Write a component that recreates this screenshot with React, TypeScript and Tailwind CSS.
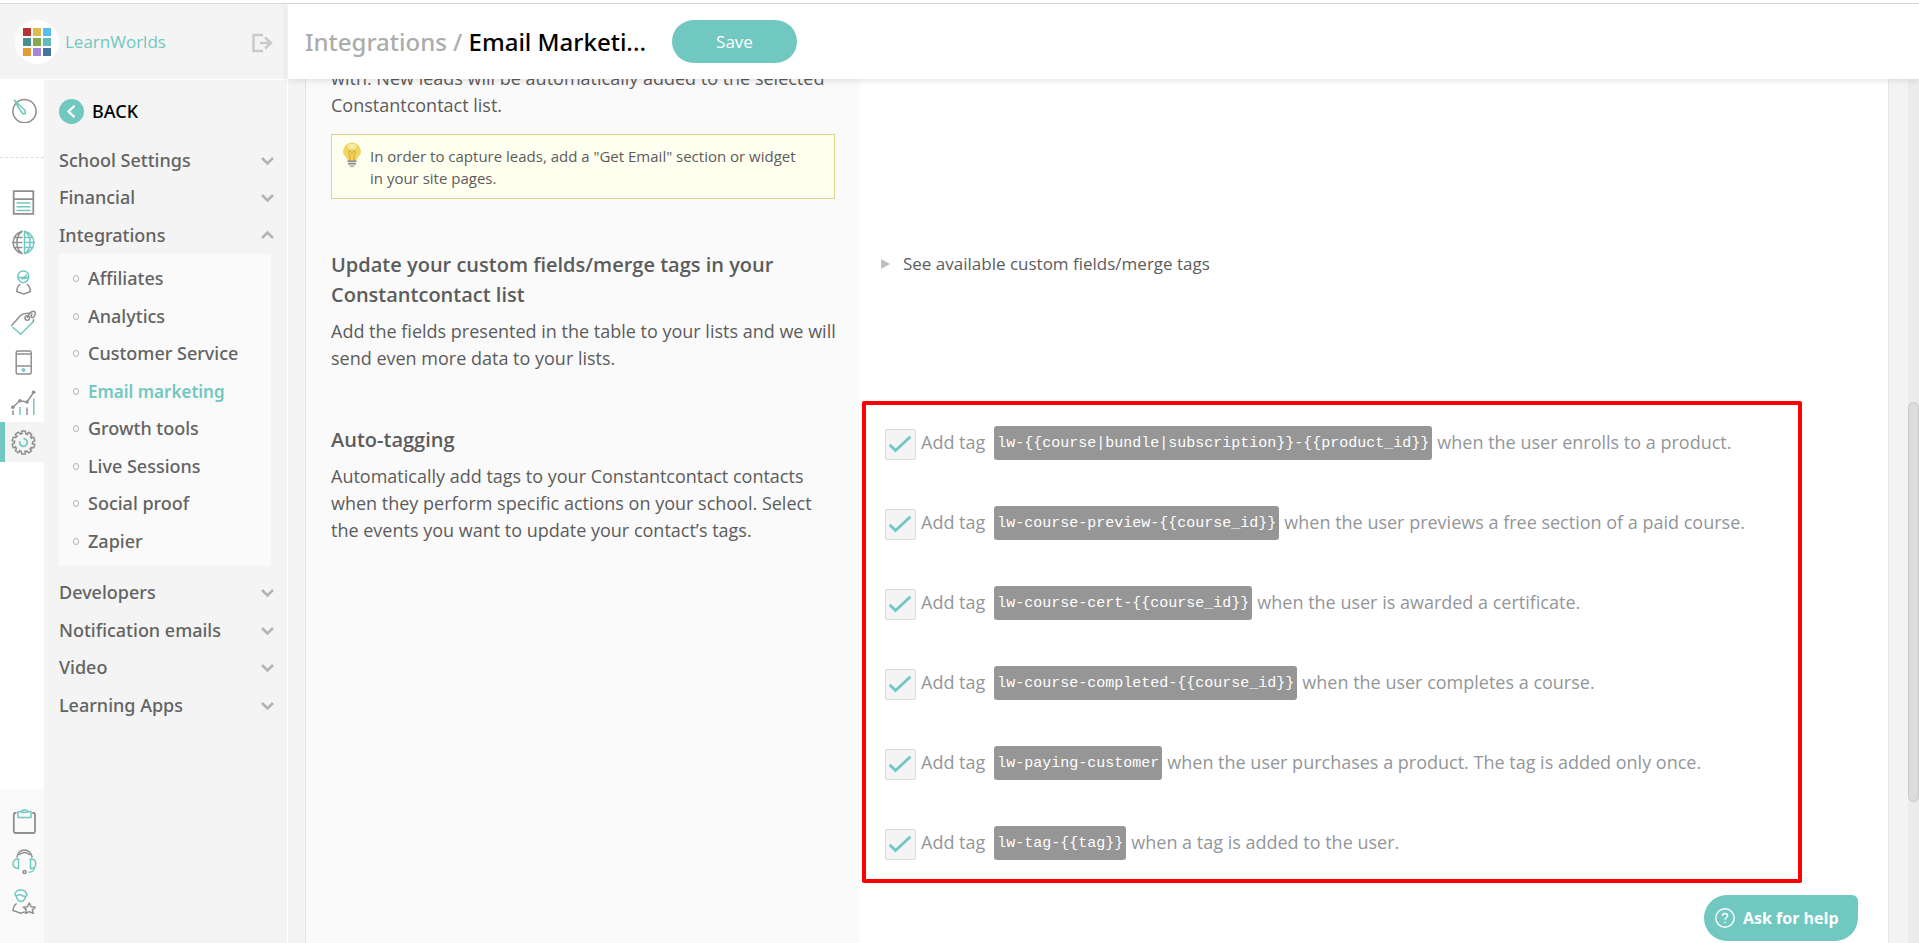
import type { ReactNode } from 'react'

const GREY = '#8f8f8f'
const TEAL = '#70c8c0'

const Icon = ({ children }: { children: ReactNode }) => (
  <svg viewBox="0 0 25 25" className="size-[25px]" fill="none" stroke={GREY} strokeWidth="1.5" aria-hidden="true">
    {children}
  </svg>
)

const GaugeIcon = () => (
  <Icon>
    <circle cx="12.5" cy="13.2" r="11.6" />
    <path d="M2.4 2.2 13.2 12.5v3.2h-2.4L7.2 10.5Z" stroke={TEAL} strokeLinejoin="round" />
  </Icon>
)

const PageIcon = () => (
  <Icon>
    <path d="M2.7 1.2h19.6v22.6H2.7zM2.7 9.2h19.6" strokeWidth="1.8" />
    <path d="M5.5 13h14M5.5 16.8h14M5.5 20.6h14" stroke={TEAL} />
  </Icon>
)

const GlobeIcon = () => (
  <Icon>
    <path d="M11.5 1.2A11.5 11.5 0 0 0 11.5 23.8M11.5 1.2C4 6 4 19 11.5 23.8M2.5 7.4h9M.9 12.5h10.6M2.5 17.6h9" />
    <path d="M13.5 1v23M13.5 1.2a11.5 11.5 0 0 1 0 22.6M13.5 1.2C21 6 21 19 13.5 23.8M13.5 7.4h9M13.5 12.5h10.6M13.5 17.6h9" stroke={TEAL} />
  </Icon>
)

const UserIcon = () => (
  <Icon>
    <path d="M12.3 1a5.4 5 0 0 1 5.5 5c0 4-2.5 6.7-5.5 6.7S6.8 10 6.8 6a5.4 5 0 0 1 5.5-5ZM7 7.5h3c3 0 5-1 5.5-3.2M10.2 8.8c3 0 5-.8 7.3-1.8" stroke={TEAL} />
    <path d="M8.9 14.5c-1.9 1.5-3.2 4.5-3 7.3l6.8 2.2 6.5-2.2c.2-2.8-1-5.8-3-7.3" strokeLinecap="round" />
  </Icon>
)

const TagIcon = () => (
  <Icon>
    <path d="M.7 15.5 9.5 5.6c2-2.1 4-2.6 9.5-2.4M22.5 9.8l-.4 2" strokeLinecap="round" />
    <circle cx="16.3" cy="8" r="2.3" />
    <path d="M16.3 8c1.5-4 4-7 6.5-6.7 2.4.6 1.6 4-.3 5.7-1 1-2.4.8-2.4-.6 0-1.2.5-2.2 1.3-3" />
    <path d="m1.5 17 8.2 7.2L22 12" stroke={TEAL} strokeLinejoin="round" />
  </Icon>
)

const PhoneIcon = () => (
  <Icon>
    <rect x="5.2" y="1" width="15" height="23" rx="1.5" />
    <path d="M5.2 4h15M5.2 16h15" />
    <circle cx="12.5" cy="20" r="1.5" fill={TEAL} stroke={TEAL} strokeWidth="1" />
  </Icon>
)

const ChartIcon = () => (
  <Icon>
    <path d="M1.8 17.2 8.9 10.8 16 12 22.5 2.5" />
    <g fill={GREY} stroke="none">
      <circle cx="1.8" cy="17.2" r="1.8" />
      <circle cx="8.9" cy="10.8" r="1.8" />
      <circle cx="16" cy="12" r="1.8" />
      <circle cx="22.6" cy="2.2" r="1.8" />
    </g>
    <path d="M2 20.5V25M16 17.5V25" />
    <path d="M9 17v8M22.8 8.5V25" stroke={TEAL} />
  </Icon>
)

// One tooth and the valley after it; the gear is ten of them round the centre
const TOOTH = 'M10.2 3.7 10.7 1.1h3.6l.5 2.6q1.2.3 2.4 1.2'

const GearIcon = () => (
  <Icon>
    {[0, 36, 72, 108, 144, 180, 216, 252, 288, 324].map((angle) => (
      <path key={angle} d={TOOTH} transform={`rotate(${angle} 12.5 12.5)`} strokeLinejoin="round" />
    ))}
    <path d="M12.5 8.7a3.8 3.8 0 1 1-3.6 2.5" stroke={TEAL} strokeWidth="1.8" />
  </Icon>
)

const ClipboardIcon = () => (
  <Icon>
    <path d="M4.5 4H3Q1.8 4 1.8 5.2V22.5Q1.8 24 3.2 24H21.6Q23 24 23 22.5V5.2Q23 4 21.8 4h-1.5" strokeWidth="1.8" />
    <path d="M6 2.8h2.7C9.7.4 15.3.4 16.3 2.8H19v5.7H6ZM9 2.8q3.5 1.5 7 0" stroke={TEAL} strokeLinejoin="round" />
  </Icon>
)

const HeadsetIcon = () => (
  <Icon>
    <path d="M4.8 8.5C6 3.5 9 1 12.5 1s6.5 2.5 7.7 7.5M7 6q5.5-5 11 0" />
    <circle cx="12.5" cy="23" r="1.5" />
    <path d="M6.5 10v9.5C3 19.8 1 17.5 1 14.7S3 9.7 6.5 10ZM18.5 10v9.5c3.5.3 5.3-2 5.3-4.8s-1.8-5-5.3-4.7ZM22.5 18.5c-.5 3-2 4.8-6 4.8" stroke={TEAL} />
  </Icon>
)

const PartnerIcon = () => (
  <Icon>
    <path d="M9 1C5.5 1 3 3 3 5.5l1 1.3C5 10 6.7 12.5 9 12.5s4-2.5 4.8-5L15 6C14.5 3 12 1 9 1ZM4 6.8c2-1 3.8-1.3 5-1 1.5 1.5 3 1.8 4.8 1.7" stroke={TEAL} />
    <path d="M4.5 14.5C2.5 16 1.2 18.5 1 21.5l7.7 2.7 4-1.3" />
    <path d="m17.3 14 1.8 3.8 4.2.4-3 2.7 1 3.6-4-1.9-3.9 1.9.9-3.8-3-2.5 4.2-.4Z" strokeLinejoin="round" />
  </Icon>
)

const Chevron = ({ open = false }: { open?: boolean }) => (
  <svg viewBox="0 0 13 13" className="size-[13px]" fill="none" stroke="#b3b3b3" strokeWidth="2.6" aria-hidden="true">
    <path d={open ? 'm1 9 5.5-5.5L12 9' : 'm1 4 5.5 5.5L12 4'} />
  </svg>
)

const railItems = [
  { label: 'Pages', icon: <PageIcon /> },
  { label: 'Website', icon: <GlobeIcon /> },
  { label: 'Users', icon: <UserIcon /> },
  { label: 'Marketing', icon: <TagIcon /> },
  { label: 'Mobile app', icon: <PhoneIcon /> },
  { label: 'Reports', icon: <ChartIcon /> },
  { label: 'Settings', icon: <GearIcon />, active: true },
]

const railFooter = [
  { label: 'My account', icon: <ClipboardIcon /> },
  { label: 'Need help?', icon: <HeadsetIcon /> },
  { label: 'Become a partner', icon: <PartnerIcon /> },
]

const topMenu = ['School Settings', 'Financial', 'Integrations']
const bottomMenu = ['Developers', 'Notification emails', 'Video', 'Learning Apps']
const integrations = [
  'Affiliates',
  'Analytics',
  'Customer Service',
  'Email marketing',
  'Growth tools',
  'Live Sessions',
  'Social proof',
  'Zapier',
]

const tags = [
  { tag: 'lw-{{course|bundle|subscription}}-{{product_id}}', when: 'when the user enrolls to a product.' },
  { tag: 'lw-course-preview-{{course_id}}', when: 'when the user previews a free section of a paid course.' },
  { tag: 'lw-course-cert-{{course_id}}', when: 'when the user is awarded a certificate.' },
  { tag: 'lw-course-completed-{{course_id}}', when: 'when the user completes a course.' },
  { tag: 'lw-paying-customer', when: 'when the user purchases a product. The tag is added only once.' },
  { tag: 'lw-tag-{{tag}}', when: 'when a tag is added to the user.' },
]

const logoRows = [
  ['#b8352f', '#dcbc4c', '#55bdf0'],
  ['#479090', '#86a94a', '#5fbcbc'],
  ['#e39b38', '#a286dc', '#45759f'],
]

const Logo = () => (
  <svg viewBox="0 0 44 44" className="size-11" aria-hidden="true">
    <circle cx="22" cy="22" r="22" fill="#fff" />
    {logoRows.map((row, y) =>
      row.map((color, x) => <rect key={color} x={8 + x * 10} y={8 + y * 10} width="8" height="8" fill={color} />)
    )}
  </svg>
)

const MenuRow = ({ label, open = false }: { label: string; open?: boolean }) => (
  <button type="button" aria-expanded={open} className="flex items-center justify-between text-left">
    {label}
    <Chevron open={open} />
  </button>
)

const Rail = () => (
  <nav aria-label="Main" className="flex w-11 shrink-0 flex-col bg-white">
    <a href="#dashboard" aria-label="Dashboard" className="flex h-[78px] justify-center border-b border-dashed border-[#dedede] pt-[18px] pl-1">
      <GaugeIcon />
    </a>
    <div className="mt-6 flex flex-col">
      {railItems.map((item) => (
        <a
          key={item.label}
          href="#section"
          aria-label={item.label}
          className={`flex h-10 items-center justify-center border-l-[5px] pr-0.5 ${
            item.active ? 'border-[#70c8c0] bg-[#f4f4f4]' : 'border-transparent'
          }`}
        >
          {item.icon}
        </a>
      ))}
    </div>
    <div className="mt-auto flex h-[154px] flex-col bg-[#fafafa] pt-3">
      {railFooter.map((item) => (
        <a key={item.label} href="#support" aria-label={item.label} className="flex h-10 items-center justify-center pl-1">
          {item.icon}
        </a>
      ))}
    </div>
  </nav>
)

const Sidebar = () => (
  <aside className="flex w-72 shrink-0 flex-col border-r border-white bg-[#f4f4f4]">
    <div className="flex h-[76px] shrink-0 items-center border-b border-white pr-[13px] pl-[15px]">
      <Logo />
      <span className="ml-1.5 text-[17px] text-[#70c8c0]">LearnWorlds</span>
      <button type="button" aria-label="Exit" className="mt-0.5 ml-auto">
        <svg viewBox="0 0 23 20" className="h-5 w-[23px]" fill="none" stroke="#cacaca" strokeWidth="2.5" aria-hidden="true">
          <path d="M12 2H2.5v16H12M9 10h11M14 4.5l6 5.5-6 5.5" />
        </svg>
      </button>
    </div>
    <div className="flex flex-1">
      <Rail />
      <nav
        aria-label="Settings"
        className="flex flex-1 flex-col pr-[13px] pl-[15px] font-['Noto_Sans',sans-serif] text-[18px] font-medium text-[#636363]"
      >
        <button type="button" className="mt-[19px] flex h-[25px] items-center gap-2 text-black">
          <svg viewBox="0 0 25 25" className="size-[25px]" fill="none" aria-hidden="true">
            <circle cx="12.5" cy="12.5" r="12.5" fill={TEAL} />
            <path d="M14.8 7.5 9.5 12.5l5.3 5" stroke="#fff" strokeWidth="2.4" strokeLinecap="round" />
          </svg>
          BACK
        </button>
        <div className="mt-[18px] grid h-[112px] grid-rows-3">
          {topMenu.map((label) => (
            <MenuRow key={label} label={label} open={label === 'Integrations'} />
          ))}
        </div>
        <ul className="mr-[3px] grid h-[312px] grid-rows-8 bg-[#fafafa] py-1.5 pl-3.5">
          {integrations.map((label) => (
            <li key={label} className="flex items-center">
              <a
                href="#integration"
                className={`flex items-center gap-[9px] ${label === 'Email marketing' ? 'text-[17px] font-semibold text-[#70c8c0]' : ''}`}
              >
                <span className="h-[7px] w-1.5 rounded-full border border-[#b5b5b5]" />
                {label}
              </a>
            </li>
          ))}
        </ul>
        <div className="mt-2 grid h-[150px] grid-rows-4">
          {bottomMenu.map((label) => (
            <MenuRow key={label} label={label} />
          ))}
        </div>
      </nav>
    </div>
  </aside>
)

const Bulb = () => (
  <svg viewBox="0 0 20 26" className="h-[26px] w-5 shrink-0" fill="none" aria-hidden="true">
    <path d="M10 .5a9 9 0 0 1 9 9c0 4-3.5 5-4.5 8.5h-9C4.5 14.5 1 13.5 1 9.5a9 9 0 0 1 9-9Z" fill="#f0d560" />
    <ellipse cx="10" cy="4.5" rx="4.5" ry="2.8" fill="#f8eaa4" />
    <path d="M8 18V12l-2-2 2-1 2 2 2-2 2 1-2 2v6" stroke="#cda52e" />
    <path d="M5.5 19.2h9M6 21.7h8" stroke="#8a8a8a" strokeWidth="1.8" />
    <path d="M7 23.3h6l-1.5 2h-3z" fill="#b5b5b5" />
  </svg>
)

const Header = () => (
  <header className="z-10 flex h-[75px] shrink-0 items-center bg-white pl-[17px] shadow-[0_1px_8px_rgba(0,0,0,0.12)]">
    <h1 className="w-[340px] font-['Noto_Sans',sans-serif] text-[24px] font-medium whitespace-nowrap text-black">
      <span className="text-[#acacac]">Integrations / </span>
      Email Marketi...
    </h1>
    <button type="button" className="ml-[27px] h-[43px] w-[125px] rounded-full bg-[#70c8c0] text-[17px] text-white">
      Save
    </button>
  </header>
)

const TagOption = ({ tag, when }: { tag: string; when: string }) => (
  <label className="flex h-[34px] items-center whitespace-nowrap text-[#939699]">
    <span className="relative mt-0.5 size-[31px] shrink-0">
      <input
        type="checkbox"
        defaultChecked
        className="peer block size-[31px] appearance-none rounded-[2px] border border-[#dcdcdc] bg-[#f4f4f4]"
      />
      <svg
        viewBox="0 0 31 31"
        className="pointer-events-none absolute inset-0 hidden peer-checked:block"
        fill="none"
        stroke={TEAL}
        strokeWidth="2.8"
        strokeLinecap="round"
        aria-hidden="true"
      >
        <path d="m5.5 16.5 5 5L24.5 8.5" />
      </svg>
    </span>
    <span className="ml-[5px] pb-0.5">Add tag</span>
    <code className="mr-[5px] ml-[9px] flex h-[34px] items-center rounded-[3px] bg-[#969696] px-[3px] pt-0.5 font-['Liberation_Mono',monospace] text-[15px] text-white">
      {tag}
    </code>
    <span className="pb-0.5">{when}</span>
  </label>
)

export default function App() {
  return (
    <div className="flex h-screen flex-col overflow-hidden border-t-[3px] border-white bg-[#f4f4f4] font-['Open_Sans',sans-serif] text-[18px] text-[#5c5c5c]">
      <div className="flex min-h-0 flex-1 border-t border-[#dcdcdc]">
        <Sidebar />
        <div className="flex min-w-0 flex-1 flex-col">
          <Header />
          <main className="mr-[30px] ml-[17px] flex min-h-0 flex-1 border-x border-[#e6e6e6] bg-white">
            <section className="w-[554px] shrink-0 bg-[#fafafa] pr-5 pl-[25px]">
              <p className="-mt-[14px] leading-[27px]">
                with. New leads will be automatically added to the selected Constantcontact list.
              </p>
              <div className="mt-[15px] mr-[5px] flex gap-2 border border-[#dcd28a] bg-[#fffff0] py-[7px] pr-[22px] pl-2.5">
                <Bulb />
                <p className="pt-[3px] pb-0.5 text-[15px] leading-[22px]">
                  In order to capture leads, add a "Get Email" section or widget in&nbsp;your site pages.
                </p>
              </div>
              <h2 className="mt-[51px] text-[20px] leading-[30px] font-semibold">
                Update your custom fields/merge tags in your Constantcontact list
              </h2>
              <p className="mt-2 leading-[27px]">
                Add the fields presented in the table to your lists and we will send even more data to your lists.
              </p>
              <h2 className="mt-[53px] text-[20px] leading-[30px] font-semibold">Auto-tagging</h2>
              <p className="mt-2 leading-[27px]">
                Automatically add tags to your Constantcontact contacts when they perform specific actions on your
                school. Select the events you want to update your contact’s tags.
              </p>
            </section>
            <section className="min-w-0 flex-1">
              <button type="button" className="mt-[170px] ml-[21px] flex h-[30px] items-center gap-[13px] text-[17px]">
                <svg viewBox="0 0 9 10" className="h-2.5 w-[9px]" aria-hidden="true">
                  <path d="M0 0 9 5 0 10Z" fill="#c0c0c0" />
                </svg>
                See available custom fields/merge tags
              </button>
              <div className="mt-[122px] mr-[86px] ml-0.5 flex h-[482px] flex-col gap-[46px] rounded-[2px] border-4 border-[#ff0000] pt-[21px] pl-[19px]">
                {tags.map((item) => (
                  <TagOption key={item.tag} tag={item.tag} when={item.when} />
                ))}
              </div>
            </section>
          </main>
        </div>
      </div>

      {/* Page scrollbar */}
      <div className="absolute top-1 right-0 bottom-0 w-[11px] bg-[#ececec] pt-[398px]">
        <div className="h-[400px] rounded-full border border-[#c8c8c8] bg-[#dcdcdc]" />
      </div>

      <button
        type="button"
        className="absolute right-[61px] bottom-0.5 flex h-[46px] w-[154px] items-center gap-2 rounded-[23px] rounded-tr-[6px] bg-[#70c8c0] pl-[11px] text-[16px] font-bold text-white"
      >
        <svg viewBox="0 0 20 20" className="size-5" fill="none" stroke="#fff" strokeWidth="1.4" aria-hidden="true">
          <circle cx="10" cy="10" r="9.2" />
          <path d="M7.5 8c0-1.5 1-2.5 2.5-2.5s2.6.9 2.6 2.3c0 1.9-2.6 2-2.6 4M10 13.5V15" />
        </svg>
        Ask for help
      </button>
    </div>
  )
}
